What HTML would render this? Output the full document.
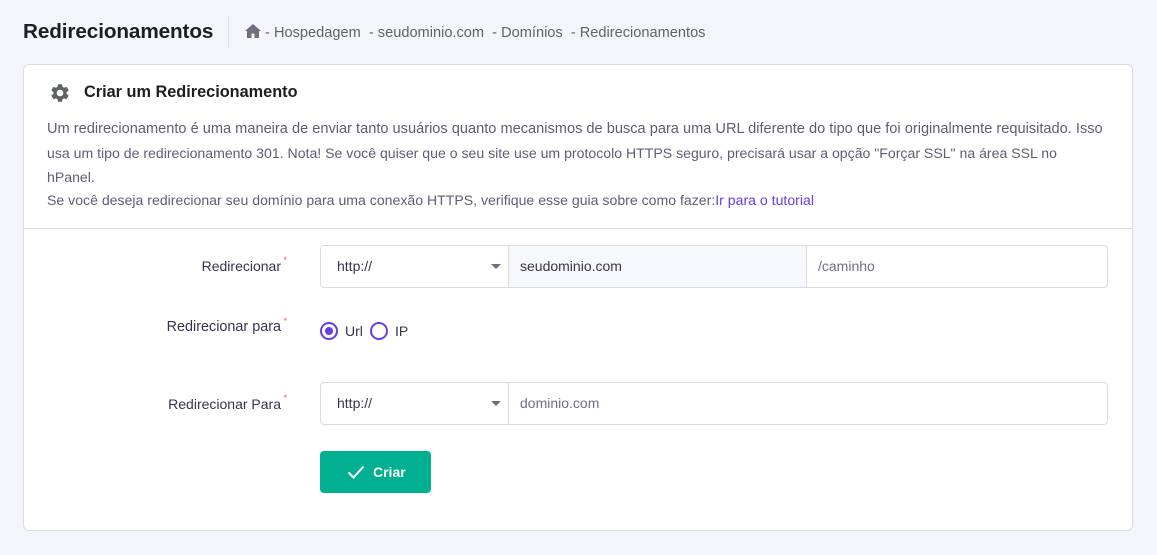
<!DOCTYPE html>
<html><head><meta charset="utf-8"><style>
*{box-sizing:border-box;margin:0;padding:0}
body{width:1157px;height:555px;background:#f4f4fb;font-family:"Liberation Sans",sans-serif;color:#2f1c6a;position:relative;overflow:hidden}
.abs{position:absolute}
h1{position:absolute;left:23px;top:20px;font-size:20.7px;font-weight:bold;color:#1d1e20;letter-spacing:-0.1px}
.sep{left:228px;top:16px;width:1px;height:32px;background:#dadce0}
.bc{left:245px;top:24px;font-size:14.6px;color:#5f6368;white-space:nowrap}
.card{left:23px;top:64px;width:1110px;height:467px;background:#fff;border:1px solid #dadce0;border-radius:6px}
.desc{left:47px;top:117px;width:1080px;font-size:14.1px;line-height:23.8px;color:#5f5d72;white-space:nowrap}
.desc a{color:#673de6;text-decoration:none}
.hr{left:24px;top:228px;width:1108px;height:1px;background:#dadce0}
.lbl{font-size:14px;color:#36344d;text-align:right;width:130px}
.lbl sup{color:#fc5185;font-size:9px;position:absolute;right:-6px;top:-3px}
.box{border:1px solid #dadce0;border-radius:4px;background:#fff;height:43px}
.in{font-size:14px;color:#36344d;position:absolute;top:12px}
.arr{position:absolute;width:0;height:0;border-left:5px solid transparent;border-right:5px solid transparent;border-top:5px solid #6d7081}
.btn{left:320px;top:451px;width:111px;height:42px;background:#00b090;border-radius:4px;color:#fff;font-weight:bold;font-size:14px}
</style></head><body>
<h1>Redirecionamentos</h1>
<div class="abs sep"></div>
<div class="abs bc"><svg width="16" height="14" viewBox="0 0 16 14" style="vertical-align:-1px"><path d="M8 0L0 7h2v7h4.5V9.5h3V14H14V7h2z" fill="#6d7081"/></svg> - Hospedagem &nbsp;- seudominio.com &nbsp;- Domínios &nbsp;- Redirecionamentos</div>
<div class="abs card"></div>
<svg class="abs" style="left:49px;top:82px" width="22" height="22" viewBox="0 0 24 24"><path fill="#5f6368" d="M19.14 12.94c.04-.3.06-.61.06-.94 0-.32-.02-.64-.07-.94l2.03-1.580a.49.49 0 00.12-.61l-1.920-3.320a.49.49 0 00-.59-.22l-2.39.96c-.5-.38-1.03-.7-1.62-.94l-.36-2.54a.48.48 0 00-.48-.41h-3.84c-.24 0-.43.17-.47.41l-.36 2.54c-.59.24-1.130.57-1.62.94l-2.39-.96a.48.48 0 00-.59.22L2.74 8.87c-.12.21-.08.47.12.61l2.03 1.58c-.05.3-.09.63-.09.94s.02.64.07.94l-2.03 1.58a.49.49 0 00-.12.61l1.92 3.32c.12.22.37.29.59.22l2.39-.96c.5.38 1.03.7 1.62.94l.36 2.54c.05.24.24.41.48.41h3.84c.24 0 .44-.17.47-.41l.36-2.54c.59-.24 1.130-.56 1.620-.94l2.39.96c.22.08.47 0 .59-.22l1.92-3.32c.12-.22.07-.47-.12-.61l-2.01-1.58zM12 15.6A3.6 3.6 0 1112 8.4a3.6 3.6 0 010 7.2z"/></svg>
<div class="abs" style="left:84px;top:83px;font-size:16.3px;font-weight:bold;color:#1d1e20">Criar um Redirecionamento</div>
<div class="abs desc"><span style="font-size:14.6px">Um redirecionamento é uma maneira de enviar tanto usuários quanto mecanismos de busca para uma URL diferente do tipo que foi originalmente requisitado. Isso</span><br>usa um tipo de redirecionamento 301. Nota! Se você quiser que o seu site use um protocolo HTTPS seguro, precisará usar a opção "Forçar SSL" na área SSL no<br>hPanel.<br>Se você deseja redirecionar seu domínio para uma conexão HTTPS, verifique esse guia sobre como fazer:<a>Ir para o tutorial</a></div>
<div class="abs hr"></div>

<div class="abs lbl" style="left:151px;top:258px">Redirecionar<sup>*</sup></div>
<div class="abs box" style="left:320px;top:245px;width:788px"></div>
<div class="abs" style="left:508px;top:246px;width:299px;height:41px;background:#f7f8fc;border-left:1px solid #dadce0;border-right:1px solid #dadce0"></div>
<div class="in" style="left:337px;top:258px">http://</div>
<div class="arr" style="left:491px;top:264px"></div>
<div class="in" style="left:520px;top:258px">seudominio.com</div>
<div class="in" style="left:818px;top:258px;color:#6d7081">/caminho</div>

<div class="abs lbl" style="left:151px;top:319px;font-size:14.4px">Redirecionar para<sup>*</sup></div>
<div class="abs" style="left:320px;top:322px;width:18px;height:18px;border:2px solid #673de6;border-radius:50%"></div>
<div class="abs" style="left:325px;top:327px;width:8px;height:8px;background:#673de6;border-radius:50%"></div>
<div class="in" style="left:345px;top:323px">Url</div>
<div class="abs" style="left:370px;top:322px;width:18px;height:18px;border:2px solid #673de6;border-radius:50%"></div>
<div class="in" style="left:395px;top:323px">IP</div>

<div class="abs lbl" style="left:151px;top:396px">Redirecionar Para<sup>*</sup></div>
<div class="abs box" style="left:320px;top:382px;width:788px"></div>
<div class="abs" style="left:508px;top:383px;width:1px;height:41px;background:#dadce0"></div>
<div class="in" style="left:337px;top:395px">http://</div>
<div class="arr" style="left:491px;top:401px"></div>
<div class="in" style="left:520px;top:395px;color:#6d7081">dominio.com</div>

<div class="abs btn"><svg class="abs" style="left:27px;top:14px" width="18" height="14" viewBox="0 0 18 14"><path d="M1.5 7.5l5 5L16.5 1.5" fill="none" stroke="#fff" stroke-width="2"/></svg><span class="abs" style="left:53px;top:13px">Criar</span></div>
</body></html>
